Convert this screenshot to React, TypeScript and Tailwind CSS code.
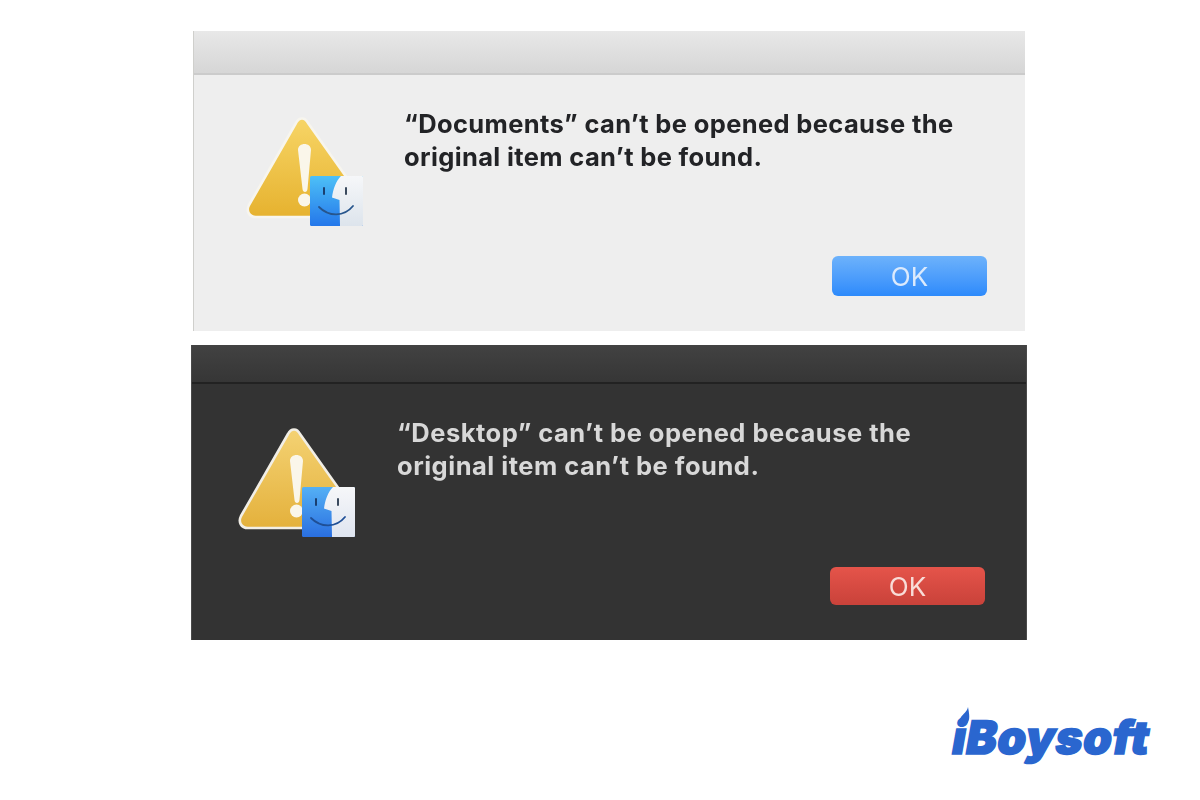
import React from "react";

function AlertIcon({ id, dark }: { id: string; dark: boolean }) {
  return (
    <svg width="120" height="114" viewBox="0 0 120 114" className="block blur-[0.6px]">
      <defs>
        <linearGradient id={`tri-${id}`} x1="0" y1="0" x2="0" y2="1">
          <stop offset="0" stopColor={dark ? "#f4d273" : "#f7d566"} />
          <stop offset="1" stopColor={dark ? "#e4b13c" : "#e6b22f"} />
        </linearGradient>
        <linearGradient id={`blue-${id}`} x1="0" y1="0" x2="0" y2="1">
          <stop offset="0" stopColor={dark ? "#54b0f5" : "#4dc0f7"} />
          <stop offset="1" stopColor={dark ? "#2a6fe0" : "#2477ea"} />
        </linearGradient>
        <linearGradient id={`white-${id}`} x1="0" y1="0" x2="0" y2="1">
          <stop offset="0" stopColor="#f6f7f9" />
          <stop offset="1" stopColor={dark ? "#dfe5f0" : "#dde4ec"} />
        </linearGradient>
      </defs>
      <path
        d="M50 8 C53 2 59 2 62 8 L106 70 L106 102 L10 102 C3 102 0 96 3 90 Z"
        fill={`url(#tri-${id})`}
        stroke={dark ? "#f1eee6" : "#f7f5ee"}
        strokeWidth="2.6"
        strokeLinejoin="round"
      />
      <path d="M52 35 C52 27 65 27 65 35 L61.5 74 C61.2 78 56.8 78 56.5 74 Z" fill="#faf6ea" />
      <circle cx="58.5" cy="85" r="6.5" fill="#faf6ea" />
      <rect x="64" y="61" width="53" height="50" rx="1.5" fill={`url(#blue-${id})`} />
      <path
        d="M95 61 H115.5 C116.5 61 117 61.5 117 62.5 V109.5 C117 110.5 116.5 111 115.5 111 H94 L93.5 85 L86 82.5 C87 74 90 66 95 61 Z"
        fill={`url(#white-${id})`}
      />
      <path d="M73 92 C83 102 98 102 107 91" fill="none" stroke={dark ? "#1f4f96" : "#27558c"} strokeWidth="1.8" strokeLinecap="round" />
      <path d="M78 73 V79" stroke="#1a3f70" strokeWidth="2" strokeLinecap="round" />
      <path d="M100 73 V79" stroke="#3a4a5e" strokeWidth="2" strokeLinecap="round" />
    </svg>
  );
}

function Dialog(props: {
  dark: boolean;
  name: string;
  className: string;
  bar: string;
  iconPad: string;
  textPad: string;
  textColor: string;
  btn: string;
  btnPad: string;
  btnText: string;
}) {
  return (
    <div className={props.className}>
      <div className={props.bar} />
      <div className="flex h-[130px] items-start">
        <div className={props.iconPad}>
          <AlertIcon id={props.name} dark={props.dark} />
        </div>
        <p className={props.textPad + " " + props.textColor + " whitespace-nowrap text-[25.5px] font-bold leading-[33px] blur-[0.5px]"}>
          “{props.name}” can’t be opened because the
          <br />
          original item can’t be found.
        </p>
      </div>
      <div className={props.btnPad}>
        <div className={props.btn + " flex items-center justify-center rounded-[6px] text-[26px] blur-[0.4px] " + props.btnText}>OK</div>
      </div>
    </div>
  );
}

export default function App() {
  return (
    <div className="flex h-[800px] w-[1200px] flex-col overflow-hidden bg-white font-['Inter','Liberation_Sans',sans-serif]">
      <div className="pl-[193px] pt-[31px]">
        <Dialog
          dark={false}
          name="Documents"
          className="h-[300px] w-[832px] border-l border-l-[#cfcfcc] bg-[#eeeeee]"
          bar="h-[44px] border-b-2 border-b-[#cbcbcb] bg-gradient-to-b from-[#e8e8e8] to-[#d6d6d6]"
          iconPad="pl-[52px] pt-[40px] w-[210px] shrink-0"
          textPad="pt-[32px]"
          textColor="text-[#222326] tracking-[0.36px]"
          btn="h-[40px] w-[155px] bg-gradient-to-b from-[#6db2fb] to-[#2c8afb]"
          btnPad="flex justify-end pr-[38px] pt-[51px]"
          btnText="text-[#dceafc]"
        />
      </div>
      <div className="pl-[191px] pt-[14px]">
        <Dialog
          dark
          name="Desktop"
          className="h-[295px] w-[836px] border-x border-x-[#4a4a4a] bg-[#333333]"
          bar="h-[39px] border-b-2 border-b-[#222222] bg-gradient-to-b from-[#424242] to-[#363636]"
          iconPad="pl-[46px] pt-[42px] w-[205px] shrink-0"
          textPad="pt-[32px]"
          textColor="text-[#d8d8d8] tracking-[0.5px]"
          btn="h-[38px] w-[155px] bg-gradient-to-b from-[#e5544a] to-[#c9423a]"
          btnPad="flex justify-end pr-[41px] pt-[53px]"
          btnText="text-[#f8dcd8]"
        />
      </div>
      <div className="flex justify-end pr-[50px] pt-[68px]">
        <div className="relative">
          <span className="block -skew-x-[10deg] text-[46px] font-black leading-[58px] tracking-[0.5px] text-[#2a66cf] [-webkit-text-stroke:1.5px_#2a66cf]">
            iBoysoft
          </span>
          <svg width="14" height="20" viewBox="0 0 14 20" className="absolute left-[5px] top-[-1px]">
            <path d="M10 0 C11 6 13 14 8 17 C3 19 1 14 3 10 C5 7 9 5 10 0 Z" fill="#2a66cf" />
          </svg>
        </div>
      </div>
    </div>
  );
}
